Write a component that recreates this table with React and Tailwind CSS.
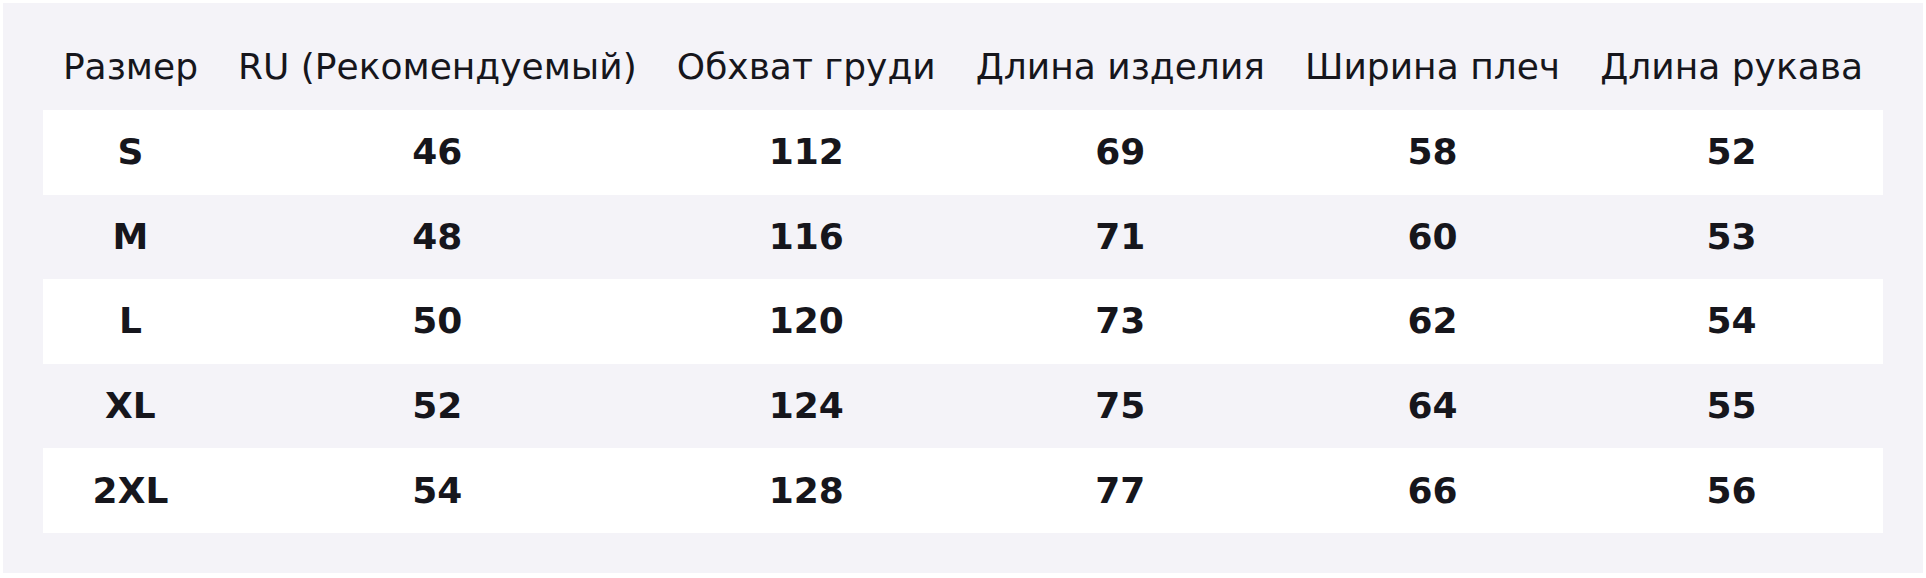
const headers = [
  'Размер',
  'RU (Рекомендуемый)',
  'Обхват груди',
  'Длина изделия',
  'Ширина плеч',
  'Длина рукава',
];

const rows = [
  ['S', '46', '112', '69', '58', '52'],
  ['M', '48', '116', '71', '60', '53'],
  ['L', '50', '120', '73', '62', '54'],
  ['XL', '52', '124', '75', '64', '55'],
  ['2XL', '54', '128', '77', '66', '56'],
];

export default function App() {
  return (
    <div className="bg-white p-[3px]" style={{ fontFamily: '"DejaVu Sans", "Noto Sans", sans-serif' }}>
      <div className="bg-[#f4f3f8] px-[40px] pt-[40px] pb-[40px]">
        <table className="w-full border-collapse text-[36px] leading-[42px] text-[#16161c]">
          <thead>
            <tr>
              {headers.map((h) => (
                <th key={h} className="px-[19.8px] pt-[3px] pb-[22px] text-center font-normal whitespace-nowrap">
                  {h}
                </th>
              ))}
            </tr>
          </thead>
          <tbody>
            {rows.map((row, i) => (
              <tr key={row[0]} className={i % 2 === 0 ? 'bg-white' : 'bg-transparent'}>
                {row.map((cell, j) => (
                  <td key={j} className="px-[19.8px] py-[21.3px] text-center font-bold">
                    {cell}
                  </td>
                ))}
              </tr>
            ))}
          </tbody>
        </table>
      </div>
    </div>
  );
}
